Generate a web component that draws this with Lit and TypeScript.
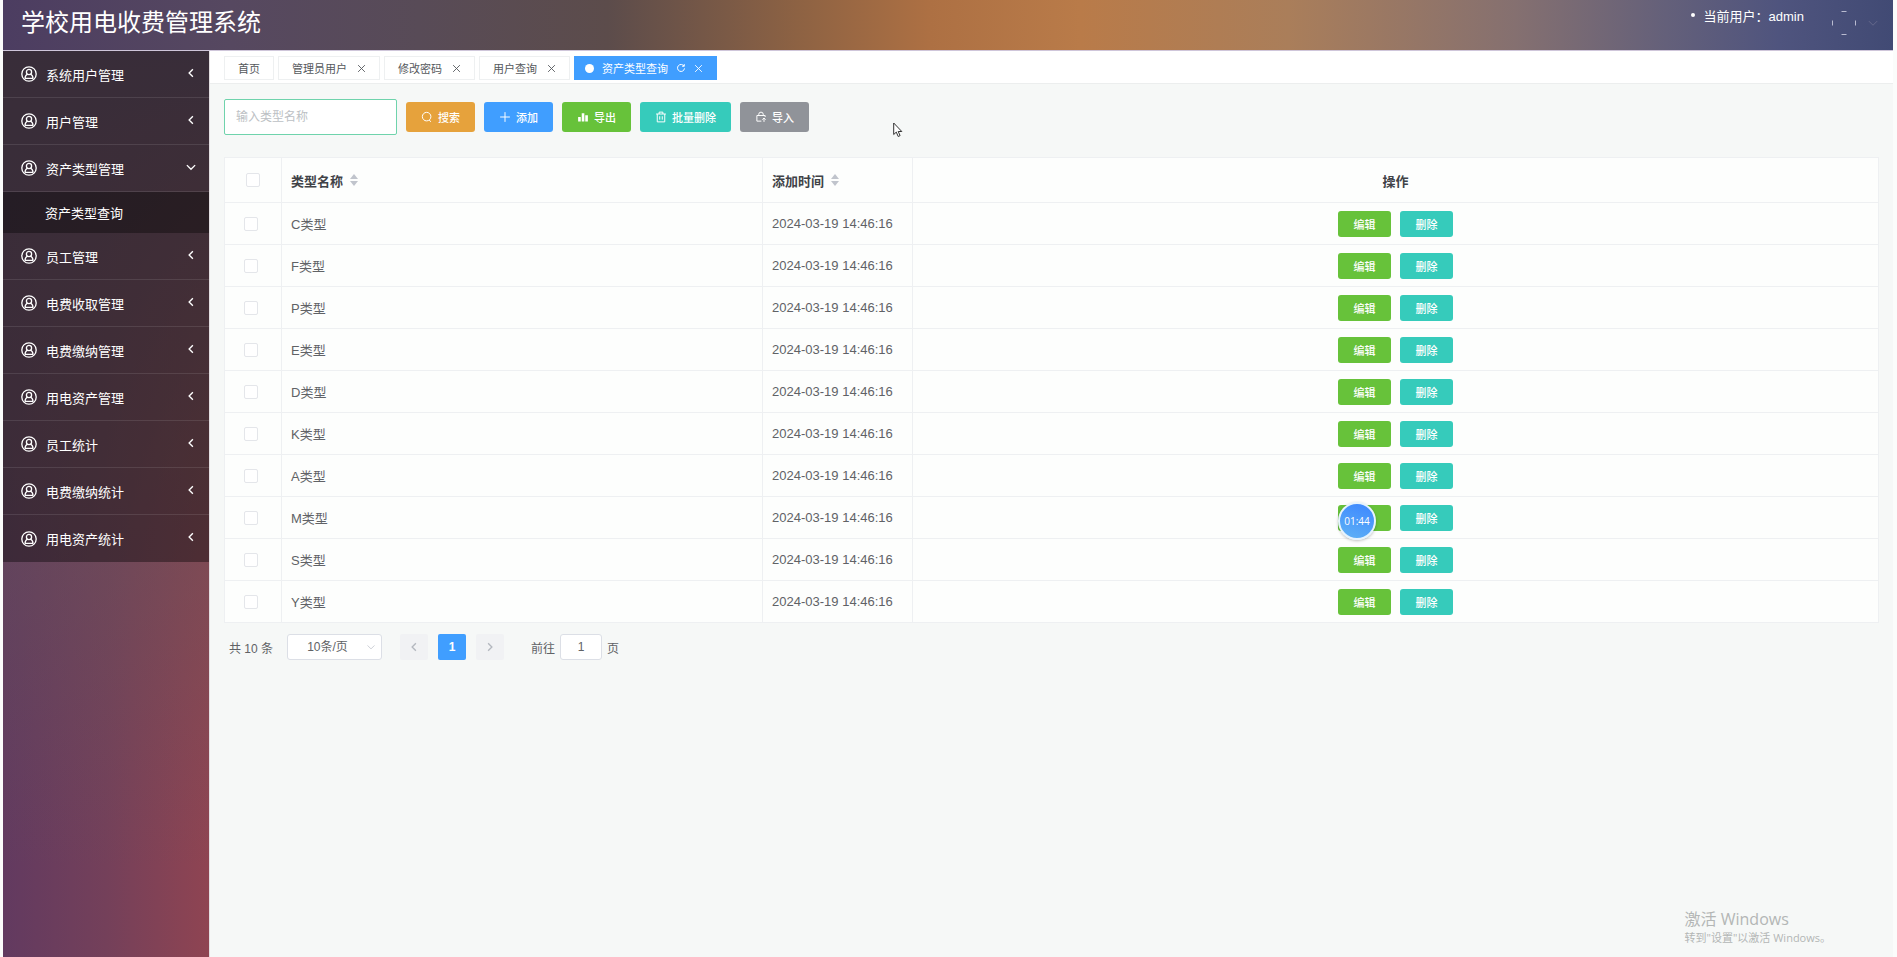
import { LitElement, html, css, svg, nothing } from "lit";
import { customElement, state } from "lit/decorators.js";

interface MenuItem {
  label: string;
  children?: string[];
}

const MENU: MenuItem[] = [
  { label: "系统用户管理" },
  { label: "用户管理" },
  { label: "资产类型管理", children: ["资产类型查询"] },
  { label: "员工管理" },
  { label: "电费收取管理" },
  { label: "电费缴纳管理" },
  { label: "用电资产管理" },
  { label: "员工统计" },
  { label: "电费缴纳统计" },
  { label: "用电资产统计" },
];

const TABS = ["首页", "管理员用户", "修改密码", "用户查询"];
const TYPES = ["C", "F", "P", "E", "D", "K", "A", "M", "S", "Y"];

const SHAPES = {
  user: svg`<circle cx="8" cy="8" r="7.2"/><circle cx="8" cy="6" r="2.6"/><path d="M4 12.300c.200-2.400 1.300-3.600 2.600-4.100M12 12.300c-.200-2.400-1.300-3.600-2.600-4.100M3.600 12.300h8.800"/>`,
  left: svg`<path d="M10.5 3 5.500 8l5 5"/>`,
  right: svg`<path d="M5.500 3l5 5-5 5"/>`,
  down: svg`<path d="M2.500 5.500 8 11l5.500-5.500"/>`,
  close: svg`<path d="m2 2 12 12M14 2 2 14"/>`,
  refresh: svg`<path d="M12.800 5A5.600 5.600 0 1 0 13.600 8.600M13.200 1.800V5.200H9.800"/>`,
  search: svg`<circle cx="7.500" cy="7.500" r="5.700"/><path d="m11 12 2 2.500"/>`,
  plus: svg`<path d="M8 1.500v13M1.500 8h13"/>`,
  chart: svg`<path fill="currentColor" stroke="none" d="M1.500 8h3.500v6H1.500zM6.300 3h3.500v11H6.300zM11 5.500h3.500v8.500H11z"/>`,
  trash: svg`<path d="M1.500 4h13M5.500 4V1.500h5V4M3 4v10.500h10V4M6.300 7v4.500M9.700 7v4.500"/>`,
  upload: svg`<path d="M8.500 13.500H2.500V6h11v2M5 6V4.500a3 3 0 0 1 6 0V6M12 14.500V9.500M9.800 11.500 12 9.300l2.200 2.200"/>`,
};

const icon = (name: keyof typeof SHAPES, cls = "") =>
  html`<svg class="icon ${cls}" viewBox="0 0 16 16" aria-hidden="true">${SHAPES[name]}</svg>`;

const iconStyles = css`
  .icon {
    width: 12px;
    height: 12px;
    flex: none;
    fill: none;
    stroke: currentColor;
    stroke-width: 1.3;
  }
  button {
    font: inherit;
    color: inherit;
    border: 0;
    padding: 0;
    background: none;
    cursor: pointer;
  }
`;

@customElement("side-menu")
export class SideMenu extends LitElement {
  static styles = [
    iconStyles,
    css`
      :host {
        display: block;
        color: #fff;
        font-size: 13px;
      }
      .menu {
        background: rgba(0, 0, 0, 0.38);
      }
      .item {
        display: flex;
        align-items: center;
        gap: 9px;
        width: 100%;
        height: 47px;
        padding: 0 12px 0 18px;
        border-bottom: 1px solid rgba(255, 255, 255, 0.1);
        text-align: left;
      }
      .item:last-child {
        border-bottom: 0;
      }
      .label {
        flex: 1;
      }
      .icon.user {
        width: 16px;
        height: 16px;
      }
      .icon.arrow {
        width: 12px;
        height: 12px;
        margin-bottom: 3px;
        stroke-width: 1.8;
      }
      .child {
        display: flex;
        align-items: center;
        height: 41px;
        padding-left: 42px;
        background: rgba(0, 0, 0, 0.35);
        color: #fff;
        text-decoration: none;
      }
    `,
  ];

  @state() private open = 2;

  render() {
    return html`<nav class="menu">
      ${MENU.map((m, i) => {
        const opened = this.open === i && m.children;
        return html`<button class="item" @click=${() => (this.open = i)}>
            ${icon("user", "user")}<span class="label">${m.label}</span>
            ${icon(opened ? "down" : "left", "arrow")}
          </button>
          ${opened ? m.children!.map((c) => html`<a class="child" href="#">${c}</a>`) : nothing}`;
      })}
    </nav>`;
  }
}

@customElement("type-table")
export class TypeTable extends LitElement {
  static styles = [
    iconStyles,
    css`
      :host {
        display: block;
        color: #606266;
        font-size: 13px;
      }
      table {
        width: 100%;
        table-layout: fixed;
        border-collapse: separate;
        border-spacing: 0;
        background: #fdfefd;
        border: solid #eef0f2;
        border-width: 1px 0 0 1px;
      }
      th,
      td {
        box-sizing: border-box;
        padding: 0 9px;
        text-align: left;
        border: solid #eef0f2;
        border-width: 0 1px 1px 0;
      }
      th {
        height: 45px;
        color: #404247;
      }
      td {
        height: 42px;
      }
      td:first-child {
        padding: 0 11px 0 7px;
      }
      .check {
        width: 57px;
      }
      .time {
        width: 150px;
      }
      .ops {
        width: 58.4%;
        text-align: center;
      }
      input {
        appearance: none;
        display: block;
        box-sizing: border-box;
        width: 14px;
        height: 14px;
        margin: 0 auto;
        border: 1px solid #e4e6ea;
        border-radius: 2px;
        background: #fff;
      }
      .head {
        display: flex;
        align-items: center;
        gap: 6px;
      }
      .sort {
        width: 10px;
        height: 12px;
        fill: #c0c4cc;
      }
      .buttons {
        display: flex;
        justify-content: center;
        gap: 9px;
      }
      .btn {
        position: relative;
        width: 53px;
        height: 26px;
        border-radius: 3px;
        background: #67c23a;
        color: #fff;
        font-size: 11px;
        font-weight: 500;
      }
      .remove {
        background: #36cbbb;
      }
      .timer {
        position: absolute;
        left: 0;
        top: -3px;
        box-sizing: border-box;
        width: 38px;
        height: 38px;
        border: 2px solid #e6f3fd;
        border-radius: 50%;
        background: linear-gradient(20deg, #5fb2f5, #3c86ff);
        box-shadow: 0 1px 3px rgba(0, 0, 0, 0.25);
        font: 10px/34px "Open Sans", sans-serif;
        text-align: center;
      }
    `,
  ];

  private heading(text: string) {
    return html`<span class="head">${text}
      <svg class="sort" viewBox="0 0 10 12" aria-hidden="true"><path d="M5 0 9 5H1zM5 12 1 7h8z" /></svg>
    </span>`;
  }

  render() {
    return html`<table>
      <thead>
        <tr>
          <th class="check"><input type="checkbox" aria-label="全选" /></th>
          <th>${this.heading("类型名称")}</th>
          <th class="time">${this.heading("添加时间")}</th>
          <th class="ops">操作</th>
        </tr>
      </thead>
      <tbody>
        ${TYPES.map(
          (t) => html`<tr>
            <td><input type="checkbox" aria-label="${t}类型" /></td>
            <td>${t}类型</td>
            <td>2024-03-19 14:46:16</td>
            <td>
              <div class="buttons">
                <button class="btn">
                  ${t === "M" ? html`<span class="timer">01:44</span>` : "编辑"}
                </button>
                <button class="btn remove">删除</button>
              </div>
            </td>
          </tr>`
        )}
      </tbody>
    </table>`;
  }
}

@customElement("page-bar")
export class PageBar extends LitElement {
  static styles = [
    iconStyles,
    css`
      :host {
        display: flex;
        align-items: center;
        padding: 0 5px;
        color: #606266;
        font-size: 12px;
      }
      .size {
        display: grid;
        align-items: center;
        width: 95px;
        margin: 0 18px 0 14px;
      }
      .size > * {
        grid-area: 1 / 1;
      }
      .size .icon {
        justify-self: end;
        width: 10px;
        height: 10px;
        margin-right: 6px;
        color: #c0c4cc;
        pointer-events: none;
      }
      select,
      input {
        box-sizing: border-box;
        height: 26px;
        border: 1px solid #dcdfe6;
        border-radius: 3px;
        background: #fff;
        color: #606266;
        font: inherit;
        text-align: center;
      }
      select {
        appearance: none;
        width: 100%;
        padding: 0 18px 0 4px;
        text-align-last: center;
      }
      input {
        width: 42px;
        margin: 0 5px;
        padding: 0;
      }
      .pages {
        display: flex;
        gap: 10px;
        margin-right: 27px;
      }
      .page {
        display: grid;
        place-items: center;
        width: 28px;
        height: 26px;
        border-radius: 2px;
        background: #f1f2f4;
        color: #b4b8bf;
      }
      .page .icon {
        stroke-width: 1.8;
      }
      .current {
        background: #409eff;
        color: #fff;
        font-weight: 700;
      }
      .goto {
        display: flex;
        align-items: center;
      }
    `,
  ];

  render() {
    return html`<span>共 10 条</span>
      <span class="size">
        <select aria-label="每页条数"><option>10条/页</option></select>
        ${icon("down")}
      </span>
      <span class="pages">
        <button class="page" aria-label="上一页">${icon("left")}</button>
        <button class="page current">1</button>
        <button class="page" aria-label="下一页">${icon("right")}</button>
      </span>
      <label class="goto">前往<input type="text" .value=${"1"} />页</label>`;
  }
}

@customElement("app-root")
export class AppRoot extends LitElement {
  static styles = [
    iconStyles,
    css`
      :host {
        position: relative;
        display: flex;
        flex-direction: column;
        box-sizing: border-box;
        min-height: 100vh;
        padding: 0 4px 0 3px;
        background: #fbfcfb;
        font-family: "Liberation Sans", "Noto Sans CJK SC", sans-serif;
      }
      .header {
        display: flex;
        align-items: flex-start;
        justify-content: space-between;
        height: 50px;
        border-bottom: 1px solid #cfc6da;
        background: linear-gradient(
          90deg,
          #4c3d61 0%,
          #564860 12%,
          #584b57 22%,
          #5c4c4b 32%,
          #8d6243 42%,
          #ad7043 49%,
          #b97b49 57%,
          #aa7e5a 68%,
          #857070 80%,
          #64607a 88%,
          #4f547e 94%,
          #414a74 100%
        );
        color: #fff;
      }
      .title {
        margin: 0;
        padding-left: 18px;
        font-size: 24px;
        line-height: 46px;
        font-weight: 400;
      }
      .account {
        display: flex;
        align-items: center;
        gap: 28px;
        padding-right: 14px;
      }
      .who {
        display: flex;
        align-items: center;
        gap: 9px;
        margin-bottom: 16px;
        font-size: 13px;
      }
      .dot {
        width: 4px;
        height: 4px;
        border-radius: 50%;
        background: #fff;
      }
      .menu-toggle {
        display: flex;
        align-items: center;
        gap: 11px;
        height: 46px;
      }
      .avatar {
        width: 24px;
        height: 24px;
        fill: none;
        stroke: #b9bbd0;
      }
      .menu-toggle .icon {
        color: #66698c;
      }
      .body {
        display: flex;
        flex: 1;
      }
      .side {
        width: 206px;
        flex: none;
        background: linear-gradient(180deg, #5b4a5c 0%, rgba(98, 84, 88, 0.5) 45%, rgba(98, 84, 88, 0) 90%),
          linear-gradient(90deg, #623a60 0%, #74405a 50%, #8f4452 100%);
        border-right: 1px solid #e3dfe2;
      }
      .main {
        display: flex;
        flex: 1;
        flex-direction: column;
        min-width: 0;
        background: #f6f8f7;
      }
      .tabs {
        display: flex;
        gap: 4px;
        padding: 5px 14px 3px;
        border-bottom: 1px solid #eceeee;
        background: #fff;
        font-size: 11px;
      }
      .tab {
        display: flex;
        align-items: center;
        box-sizing: border-box;
        gap: 10px;
        height: 24px;
        padding: 0 13px;
        border: 1px solid #eef0f1;
        color: #55585c;
      }
      .tab .icon {
        width: 9px;
        height: 9px;
        stroke-width: 1.6;
      }
      .tab button {
        display: flex;
      }
      .active {
        gap: 8px;
        padding: 0 13px 0 10px;
        border-color: #409eff;
        background: #409eff;
        color: #fff;
      }
      .bullet {
        width: 9px;
        height: 9px;
        border-radius: 50%;
        background: #fff;
      }
      .active .icon.refresh {
        width: 10px;
        height: 10px;
      }
      .content {
        display: flex;
        flex-direction: column;
        padding: 15px 14px 0 14px;
      }
      .tools {
        display: flex;
        align-items: center;
        gap: 9px;
        margin-bottom: 22px;
      }
      .query {
        box-sizing: border-box;
        width: 173px;
        height: 36px;
        padding: 0 11px;
        border: 1px solid #6fd3ac;
        border-radius: 2px;
        background: #fff;
        font: inherit;
        font-size: 12px;
      }
      .query::placeholder {
        color: #bcbfc4;
      }
      .tool {
        display: flex;
        align-items: center;
        gap: 5px;
        height: 30px;
        padding: 0 15px;
        border-radius: 3px;
        color: #fff;
        font-size: 11px;
        font-weight: 500;
      }
      .amber { background: #e6a23c; }
      .blue { background: #409eff; }
      .green { background: #67c23a; }
      .teal { background: #36cbbb; }
      .gray { background: #909399; }
      page-bar {
        margin-top: 11px;
      }
      .watermark {
        position: absolute;
        right: 66px;
        bottom: 11px;
        color: #b3b6b5;
        font: 11px/16px "Open Sans", "Noto Sans CJK SC", sans-serif;
      }
      .watermark strong {
        display: block;
        font-size: 16px;
        line-height: 22px;
        font-weight: 400;
      }
      .pointer {
        position: absolute;
        left: 893px;
        top: 122px;
        width: 10px;
        height: 16px;
        fill: #fff;
        stroke: #333;
      }
    `,
  ];

  render() {
    return html`
      <header class="header">
        <h1 class="title">学校用电收费管理系统</h1>
        <div class="account">
          <span class="who"><i class="dot"></i>当前用户：admin</span>
          <button class="menu-toggle" aria-label="用户菜单">
            <svg class="avatar" viewBox="0 0 24 24" aria-hidden="true">
              <path d="M9.500.500h5M9.500 23.500h5M.500 9.500v5M23.500 9.500v5" />
            </svg>
            ${icon("down")}
          </button>
        </div>
      </header>
      <div class="body">
        <aside class="side"><side-menu></side-menu></aside>
        <main class="main">
          <div class="tabs">
            ${TABS.map(
              (t, i) => html`<span class="tab">${t}${i
                ? html`<button aria-label="关闭">${icon("close")}</button>`
                : nothing}</span>`
            )}
            <span class="tab active">
              <i class="bullet"></i>资产类型查询
              <button aria-label="刷新">${icon("refresh", "refresh")}</button>
              <button aria-label="关闭">${icon("close")}</button>
            </span>
          </div>
          <div class="content">
            <div class="tools">
              <input class="query" type="text" aria-label="类型名称" placeholder="输入类型名称" />
              <button class="tool amber">${icon("search")}搜索</button>
              <button class="tool blue">${icon("plus")}添加</button>
              <button class="tool green">${icon("chart")}导出</button>
              <button class="tool teal">${icon("trash")}批量删除</button>
              <button class="tool gray">${icon("upload")}导入</button>
            </div>
            <type-table></type-table>
            <page-bar></page-bar>
          </div>
        </main>
      </div>
      <div class="watermark"><strong>激活 Windows</strong>转到"设置"以激活 Windows。</div>
      <svg class="pointer" viewBox="0 0 10 16" aria-hidden="true">
        <path d="M.700 1v11.500l2.600-2.400 1.900 4.400 1.900-.900-1.900-4.100h3.600z" />
      </svg>
    `;
  }
}
